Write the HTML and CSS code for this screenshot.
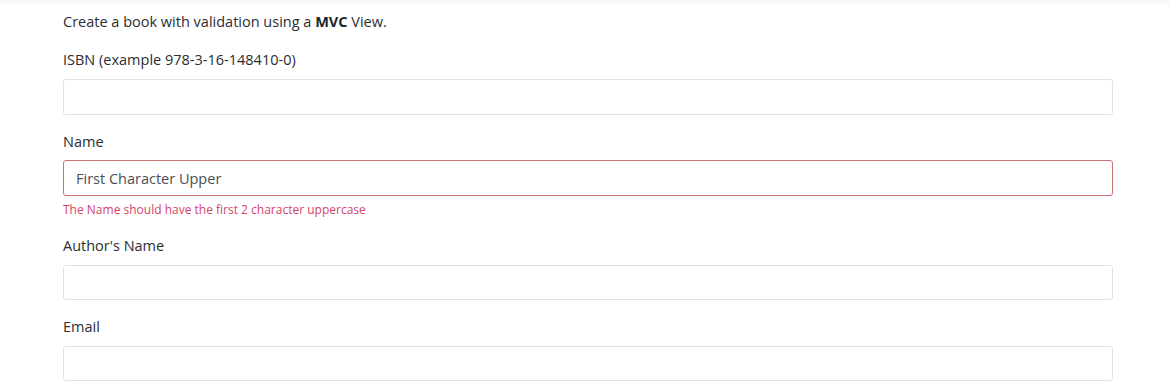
FILE: index.html
```html
<!DOCTYPE html>
<html>
<head>
<meta charset="utf-8">
<link rel="stylesheet" href="styles.css">
</head>
<body>
<div class="topbar"></div>
<main class="container">
  <p class="intro">Create a book with validation using a <strong>MVC</strong> View.</p>
  <form class="form">
    <div class="form-group">
      <label class="label">ISBN (example 978-3-16-148410-0)</label>
      <input class="control" type="text">
    </div>
    <div class="form-group">
      <label class="label">Name</label>
      <input class="control invalid" type="text" value="First Character Upper">
      <div class="error">The Name should have the first 2 character uppercase</div>
    </div>
    <div class="form-group">
      <label class="label">Author's Name</label>
      <input class="control" type="text">
    </div>
    <div class="form-group">
      <label class="label">Email</label>
      <input class="control" type="text">
    </div>
  </form>
</main>
</body>
</html>
```
FILE: styles.css
```css
* { box-sizing: border-box; }
html, body { margin: 0; padding: 0; background: #fff; }
body {
  font-family: "Open Sans", "Noto Sans", sans-serif;
  font-size: 14.5px;
  line-height: 1.5;
  color: #2a2e33;
  overflow: hidden;
}
.topbar {
  height: 0;
  box-shadow: 0 0 6px 2px rgba(0,0,0,0.08);
}
.container {
  margin-left: 63px;
  width: 1050px;
  padding-top: 11px;
}
.intro {
  margin: 0 0 16.5px 0;
}
.intro strong { font-weight: 700; color: #212529; }
.form-group { margin-bottom: 16px; }
.label {
  display: block;
  margin-bottom: 8px;
}
.control {
  display: block;
  width: 100%;
  height: 35.5px;
  padding: 6px 12px;
  font: inherit;
  color: #4a4f55;
  background: #fff;
  border: 1px solid #dfe2e5;
  border-radius: 3px;
  outline: none;
}
.control.invalid { border-color: #cc6f78; }
.error {
  margin-top: 5px;
  font-size: 12px;
  line-height: 18px;
  color: #d4446a;
}
```
